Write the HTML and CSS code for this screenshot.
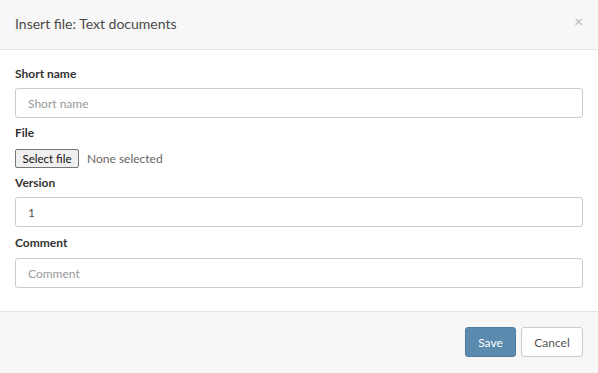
FILE: index.html
```html
<!DOCTYPE html>
<html>
<head>
<meta charset="utf-8">
<link rel="stylesheet" href="styles.css">
</head>
<body>
<div class="modal">
  <div class="modal-header">
    <h4 class="modal-title">Insert file: Text documents</h4>
    <span class="close">&times;</span>
  </div>
  <div class="modal-body">
    <div class="group">
      <label class="lbl">Short name</label>
      <input class="field" type="text" placeholder="Short name">
    </div>
    <div class="group">
      <label class="lbl">File</label>
      <div class="file-row">
        <button class="file-btn" type="button">Select file</button>
        <span class="file-status">None selected</span>
      </div>
    </div>
    <div class="group group-version">
      <label class="lbl">Version</label>
      <input class="field" type="text" value="1">
    </div>
    <div class="group group-comment">
      <label class="lbl">Comment</label>
      <input class="field" type="text" placeholder="Comment">
    </div>
  </div>
  <div class="modal-footer">
    <button class="btn btn-primary" type="button">Save</button>
    <button class="btn btn-default" type="button">Cancel</button>
  </div>
</div>
</body>
</html>
```
FILE: styles.css
```css
* { box-sizing: border-box; }
html, body { margin: 0; padding: 0; background: #fff; }
body {
  font-family: Lato, "Open Sans", sans-serif;
  font-size: 13px;
  color: #333;
}
.modal { width: 598px; height: 373px; display: flex; flex-direction: column; }
.modal-header {
  height: 50px;
  background: #f7f7f7;
  border-bottom: 1px solid #e5e5e5;
  display: flex;
  align-items: center;
  justify-content: space-between;
  padding: 0 15px 1px 15px;
}
.modal-title {
  margin: 0;
  font-size: 14px;
  font-weight: normal;
  color: #4a4a4a;
  line-height: 20px;
}
.close {
  font-size: 15px;
  font-weight: bold;
  color: #c4c4c4;
  line-height: 1;
  margin-top: -5px;
}
.modal-body {
  flex: 1;
  padding: 14px 15px 0 15px;
}
.group { display: flex; flex-direction: column; margin-bottom: 5px; }
.group-version { margin-bottom: 6px; }
.group-comment .lbl { margin-bottom: 5px; }
.lbl {
  font-weight: bold;
  font-size: 12px;
  line-height: 20px;
  margin-bottom: 4px;
  color: #333;
}
.field {
  height: 30px;
  width: 568px;
  border: 1px solid #ccc;
  border-radius: 3px;
  padding: 0 12px;
  font-family: inherit;
  font-size: 12px;
  color: #555;
  background: #fff;
  outline: none;
}
.field::placeholder { color: #999; }
.file-row {
  display: flex;
  align-items: center;
  gap: 8px;
  height: 22px;
  margin-top: 0;
  margin-bottom: -1px;
}
.file-btn {
  height: 19px;
  width: 64px;
  padding: 0;
  font-family: inherit;
  font-size: 11.5px;
  color: #111;
  background: #efefef;
  border: 1px solid #767676;
  border-radius: 2px;
}
.file-status { font-size: 12px; color: #666; }
.modal-footer {
  height: 62px;
  background: #f7f7f7;
  border-top: 1px solid #e5e5e5;
  display: flex;
  justify-content: flex-end;
  align-items: flex-start;
  gap: 5px;
  padding: 15px 15px 0 15px;
}
.btn {
  height: 30px;
  border-radius: 3px;
  font-family: inherit;
  font-size: 12px;
  padding: 0;
}
.btn-primary {
  width: 51px;
  background: #5a8aad;
  border: 1px solid #4f7d9f;
  color: #fff;
}
.btn-default {
  width: 62px;
  background: #fff;
  border: 1px solid #ccc;
  color: #555;
}
```
